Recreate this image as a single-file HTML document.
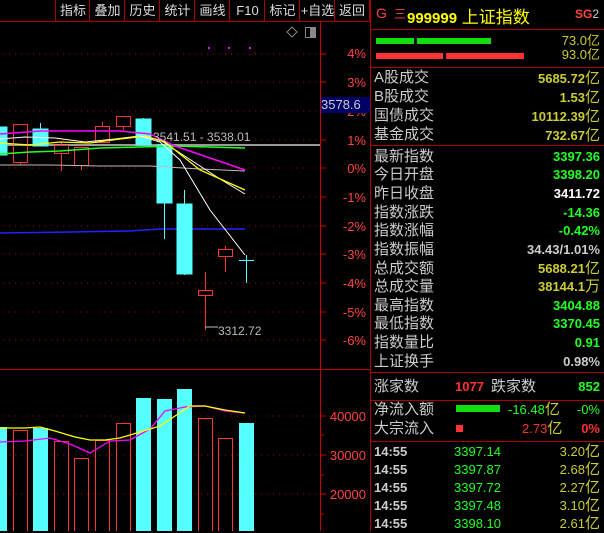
<!DOCTYPE html>
<html><head><meta charset="utf-8"><style>
body{margin:0;width:604px;height:531px;background:#000;overflow:hidden;position:relative;font-family:"Liberation Sans","Noto Sans CJK SC",sans-serif}
.a{position:absolute;white-space:nowrap}
.tb{position:absolute;top:0;height:21px;line-height:22px;font-size:13px;color:#ddd;text-align:center;border-left:1px solid #a00}
.l{position:absolute;left:374px;font-size:15px;color:#ccc;line-height:18px}
.r{position:absolute;right:4px;font-size:13px;font-weight:bold;line-height:18px;text-align:right}
.g{color:#2f2}.y{color:#cc3}.w{color:#fff}.s{color:#ccc}.rd{color:#f33}
.ax{position:absolute;font-size:13px;color:#f44;right:238px}
</style></head><body>
<div class="tb" style="left:55px;width:34px">指标</div>
<div class="tb" style="left:89px;width:35px">叠加</div>
<div class="tb" style="left:124px;width:35px">历史</div>
<div class="tb" style="left:159px;width:35px">统计</div>
<div class="tb" style="left:194px;width:35px">画线</div>
<div class="tb" style="left:229px;width:35px">F10</div>
<div class="tb" style="left:264px;width:35px">标记</div>
<div class="tb" style="left:299px;width:35px">+自选</div>
<div class="tb" style="left:334px;width:34px;border-right:1px solid #a00">返回</div>
<svg class="a" style="left:0;top:0" width="370" height="531">
<line x1="0" y1="21.5" x2="370" y2="21.5" stroke="#a00"/>
<line x1="320.5" y1="21" x2="320.5" y2="531" stroke="#c00"/>
<line x1="0" y1="369.5" x2="370" y2="369.5" stroke="#c00"/>
<g stroke="#a00" stroke-dasharray="1,5">
<line x1="3" y1="54" x2="318" y2="54"/><line x1="3" y1="82" x2="318" y2="82"/><line x1="3" y1="111" x2="318" y2="111"/><line x1="3" y1="140" x2="318" y2="140"/><line x1="3" y1="168" x2="318" y2="168"/><line x1="3" y1="197" x2="318" y2="197"/><line x1="3" y1="226" x2="318" y2="226"/><line x1="3" y1="254" x2="318" y2="254"/><line x1="3" y1="283" x2="318" y2="283"/><line x1="3" y1="312" x2="318" y2="312"/><line x1="3" y1="340" x2="318" y2="340"/>
<line x1="3" y1="416" x2="318" y2="416"/><line x1="3" y1="455" x2="318" y2="455"/><line x1="3" y1="494" x2="318" y2="494"/>
</g>
<g stroke="#c00"><line x1="320" y1="54" x2="326" y2="54"/><line x1="320" y1="82" x2="326" y2="82"/><line x1="320" y1="140" x2="326" y2="140"/><line x1="320" y1="168" x2="326" y2="168"/><line x1="320" y1="197" x2="326" y2="197"/><line x1="320" y1="226" x2="326" y2="226"/><line x1="320" y1="254" x2="326" y2="254"/><line x1="320" y1="283" x2="326" y2="283"/><line x1="320" y1="312" x2="326" y2="312"/><line x1="320" y1="340" x2="326" y2="340"/><line x1="320" y1="416" x2="326" y2="416"/><line x1="320" y1="435" x2="324" y2="435"/><line x1="320" y1="455" x2="326" y2="455"/><line x1="320" y1="475" x2="324" y2="475"/><line x1="320" y1="494" x2="326" y2="494"/><line x1="320" y1="514" x2="324" y2="514"/></g>
<line x1="0" y1="145" x2="320" y2="145" stroke="#999" stroke-width="2"/>
<g fill="#f0f"><rect x="208" y="47" width="2" height="2"/><rect x="228" y="47" width="2" height="2"/><rect x="249" y="47" width="2" height="2"/></g>
<path d="M292 27l5 5-5 5-5-5z" fill="none" stroke="#888"/><rect x="305.5" y="27.5" width="10" height="10" fill="none" stroke="#888"/><rect x="310" y="28" width="5" height="9" fill="#888"/>
<polyline points="0,233 70,232 130,231 160,229 200,229 245,229" fill="none" stroke="#22f" stroke-width="1.5"/>
<g fill="#5ff" stroke="#5ff">
<rect x="0" y="127" width="7" height="28"/><line x1="40.5" y1="123" x2="40.5" y2="146"/><rect x="33" y="129" width="15" height="17"/>
<line x1="143.5" y1="118" x2="143.5" y2="143"/><rect x="136" y="119" width="15" height="26"/>
<line x1="164.5" y1="145" x2="164.5" y2="239"/><rect x="157" y="145" width="15" height="58"/>
<line x1="184.5" y1="190" x2="184.5" y2="275"/><rect x="177" y="204" width="15" height="70"/>
<line x1="246.5" y1="255" x2="246.5" y2="283"/><line x1="239" y1="260.5" x2="254" y2="260.5"/>
</g>
<g fill="none" stroke="#f33">
<rect x="13.5" y="124.5" width="14" height="38"/><line x1="20.5" y1="162" x2="20.5" y2="165"/>
<line x1="61.5" y1="142" x2="61.5" y2="171"/><rect x="54.5" y="145.5" width="14" height="8" fill="#000"/>
<line x1="81.5" y1="165" x2="81.5" y2="170"/><rect x="74.5" y="147.5" width="14" height="18"/>
<line x1="102.5" y1="122" x2="102.5" y2="126"/><rect x="95.5" y="126.5" width="14" height="16"/>
<line x1="123.5" y1="126" x2="123.5" y2="130"/><rect x="116.5" y="116.5" width="14" height="10"/>
<line x1="205.5" y1="272" x2="205.5" y2="330"/><rect x="198.5" y="290.5" width="14" height="5" fill="#000"/>
<line x1="225.5" y1="246" x2="225.5" y2="272"/><rect x="218.5" y="249.5" width="14" height="7" fill="#000"/>
</g>
<polyline points="0,154 30,152 60,151 100,148 140,147 175,146 245,148" fill="none" stroke="#2f2" stroke-width="1.5"/>
<polyline points="0,165 50,165 100,166 150,166 200,169 245,171" fill="none" stroke="#bbb"/>
<polyline points="0,134 40,131 80,131 120,131 150,134 175,146 210,158 245,170" fill="none" stroke="#f0f" stroke-width="1.5"/>
<polyline points="0,139 25,137 55,138 85,142 115,139 140,136 160,140 180,153 220,179 245,194" fill="none" stroke="#fff"/>
<polyline points="0,143 30,145 60,142 90,143 120,139 145,136 165,142 200,170 245,190" fill="none" stroke="#ff0" stroke-width="1.3"/>
<polyline points="140,136 160,142 180,160 210,210 245,255" fill="none" stroke="#fff"/>
<text x="153" y="141" fill="#bbb" font-size="12" font-family="Liberation Sans">3541.51 - 3538.01</text>
<line x1="205" y1="327" x2="218" y2="327" stroke="#bbb"/><text x="218" y="335" fill="#bbb" font-size="12" font-family="Liberation Sans">3312.72</text>
<g fill="#5ff"><rect x="0" y="427" width="7" height="104"/><rect x="33" y="428" width="15" height="103"/><rect x="136" y="398" width="15" height="133"/><rect x="157" y="399" width="15" height="132"/><rect x="177" y="389" width="15" height="142"/><rect x="239" y="423" width="15" height="108"/></g>
<g fill="none" stroke="#f33"><rect x="13.5" y="430.5" width="14" height="110"/><rect x="54.5" y="441.5" width="14" height="100"/><rect x="74.5" y="458.5" width="14" height="80"/><rect x="95.5" y="440.5" width="14" height="100"/><rect x="116.5" y="423.5" width="14" height="110"/><rect x="198.5" y="418.5" width="14" height="120"/><rect x="218.5" y="438.5" width="14" height="100"/></g>
<polyline points="0,442 25,441 50,438 70,444 90,453 110,441 130,440 150,429 165,411 185,407 205,406 225,411 245,413" fill="none" stroke="#f0f" stroke-width="1.3"/>
<polyline points="0,428 25,428 40,427 55,431 75,437 90,440 105,440 120,438 140,432 160,426 175,416 190,406 205,406 225,410 245,413" fill="none" stroke="#ff0" stroke-width="1.3"/>
</svg>
<div class="ax" style="top:46px">4%</div><div class="ax" style="top:75px">3%</div><div class="ax" style="top:104px">2%</div><div class="ax" style="top:133px">1%</div><div class="ax" style="top:161px">0%</div>
<div class="ax" style="top:190px">-1%</div><div class="ax" style="top:219px">-2%</div><div class="ax" style="top:247px">-3%</div><div class="ax" style="top:276px">-4%</div><div class="ax" style="top:305px">-5%</div><div class="ax" style="top:333px">-6%</div>
<div class="ax" style="top:409px">40000</div><div class="ax" style="top:448px">30000</div><div class="ax" style="top:487px">20000</div>
<div class="a" style="left:321px;top:97px;width:49px;height:16px;background:#006;color:#ccc;font-size:13px;line-height:16px">3578.6</div>
<div class="a" style="left:370px;top:0;width:1px;height:531px;background:#a00"></div>
<svg class="a" style="left:370px;top:0" width="234" height="531">
<g stroke="#a00"><line x1="0" y1="29.5" x2="234" y2="29.5"/><line x1="0" y1="67.5" x2="234" y2="67.5"/><line x1="0" y1="145.5" x2="234" y2="145.5"/><line x1="0" y1="372.5" x2="234" y2="372.5"/><line x1="0" y1="400.5" x2="234" y2="400.5"/><line x1="0" y1="441.5" x2="234" y2="441.5"/></g>
<rect x="6" y="38" width="38" height="6" fill="#1d1"/><rect x="47" y="38" width="74" height="6" fill="#1d1"/>
<rect x="6" y="53" width="67" height="6" fill="#f33"/><rect x="76" y="53" width="78" height="6" fill="#f33"/>
<rect x="86" y="405" width="44" height="7" fill="#1d1"/><rect x="86" y="425" width="7" height="7" fill="#f33"/>
</svg>
<div class="a" style="left:376px;top:5px;font-size:14px;color:#f44">G</div>
<div class="a" style="left:394px;top:5px;font-size:12px;color:#f44">三</div>
<div class="a" style="left:407px;top:3px;font-size:17px;color:#ff0"><b style="font-size:15px">999999</b> 上证指数</div>
<div class="a" style="left:575px;top:7px;font-size:12px;color:#f44"><b>SG</b><span style="color:#ccc">2</span></div>
<div class="r y" style="top:32px;font-weight:normal">73.0亿</div><div class="r y" style="top:46px;font-weight:normal">93.0亿</div>
<div class="l" style="top:69px">A股成交</div><div class="r y" style="top:70px">5685.72<span style="font-weight:normal;font-size:15px">亿</span></div>
<div class="l" style="top:88px">B股成交</div><div class="r y" style="top:89px">1.53<span style="font-weight:normal;font-size:15px">亿</span></div>
<div class="l" style="top:107px">国债成交</div><div class="r y" style="top:108px">10112.39<span style="font-weight:normal;font-size:15px">亿</span></div>
<div class="l" style="top:126px">基金成交</div><div class="r y" style="top:127px">732.67<span style="font-weight:normal;font-size:15px">亿</span></div>
<div class="l" style="top:148px">最新指数</div><div class="r g" style="top:148px">3397.36</div>
<div class="l" style="top:166px">今日开盘</div><div class="r g" style="top:166px">3398.20</div>
<div class="l" style="top:185px">昨日收盘</div><div class="r w" style="top:185px">3411.72</div>
<div class="l" style="top:204px">指数涨跌</div><div class="r g" style="top:204px">-14.36</div>
<div class="l" style="top:222px">指数涨幅</div><div class="r g" style="top:222px">-0.42%</div>
<div class="l" style="top:241px">指数振幅</div><div class="r s" style="top:241px">34.43/1.01%</div>
<div class="l" style="top:260px">总成交额</div><div class="r y" style="top:260px">5688.21<span style="font-weight:normal;font-size:15px">亿</span></div>
<div class="l" style="top:278px">总成交量</div><div class="r y" style="top:278px">38144.1<span style="font-weight:normal;font-size:15px">万</span></div>
<div class="l" style="top:297px">最高指数</div><div class="r g" style="top:297px">3404.88</div>
<div class="l" style="top:315px">最低指数</div><div class="r g" style="top:315px">3370.45</div>
<div class="l" style="top:334px">指数量比</div><div class="r g" style="top:334px">0.91</div>
<div class="l" style="top:353px">上证换手</div><div class="r s" style="top:353px">0.98%</div>
<div class="l" style="top:378px">涨家数</div><div class="a rd" style="left:455px;top:378px;font-size:13px;font-weight:bold;line-height:18px">1077</div>
<div class="a" style="left:491px;top:378px;font-size:15px;color:#ccc;line-height:18px">跌家数</div><div class="r g" style="top:378px">852</div>
<div class="l" style="top:401px">净流入额</div><div class="a g" style="left:508px;top:401px;font-size:13px;line-height:18px">-16.48<span style="color:#cc3;font-size:15px">亿</span></div><div class="r g" style="top:401px;font-weight:normal">-0%</div>
<div class="l" style="top:420px">大宗流入</div><div class="a rd" style="left:522px;top:420px;font-size:13px;line-height:18px">2.73<span style="color:#cc3;font-size:15px">亿</span></div><div class="r rd" style="top:420px">0%</div>
<div class="l" style="top:443px;font-size:13px;font-weight:bold">14:55</div><div class="a g" style="left:454px;top:443px;font-size:13px;line-height:18px">3397.14</div><div class="r y" style="top:443px;font-weight:normal">3.20<span style="font-size:15px">亿</span></div>
<div class="l" style="top:461px;font-size:13px;font-weight:bold">14:55</div><div class="a g" style="left:454px;top:461px;font-size:13px;line-height:18px">3397.87</div><div class="r y" style="top:461px;font-weight:normal">2.68<span style="font-size:15px">亿</span></div>
<div class="l" style="top:479px;font-size:13px;font-weight:bold">14:55</div><div class="a g" style="left:454px;top:479px;font-size:13px;line-height:18px">3397.72</div><div class="r y" style="top:479px;font-weight:normal">2.27<span style="font-size:15px">亿</span></div>
<div class="l" style="top:497px;font-size:13px;font-weight:bold">14:55</div><div class="a g" style="left:454px;top:497px;font-size:13px;line-height:18px">3397.48</div><div class="r y" style="top:497px;font-weight:normal">3.10<span style="font-size:15px">亿</span></div>
<div class="l" style="top:515px;font-size:13px;font-weight:bold">14:55</div><div class="a g" style="left:454px;top:515px;font-size:13px;line-height:18px">3398.10</div><div class="r y" style="top:515px;font-weight:normal">2.61<span style="font-size:15px">亿</span></div>
</body></html>
